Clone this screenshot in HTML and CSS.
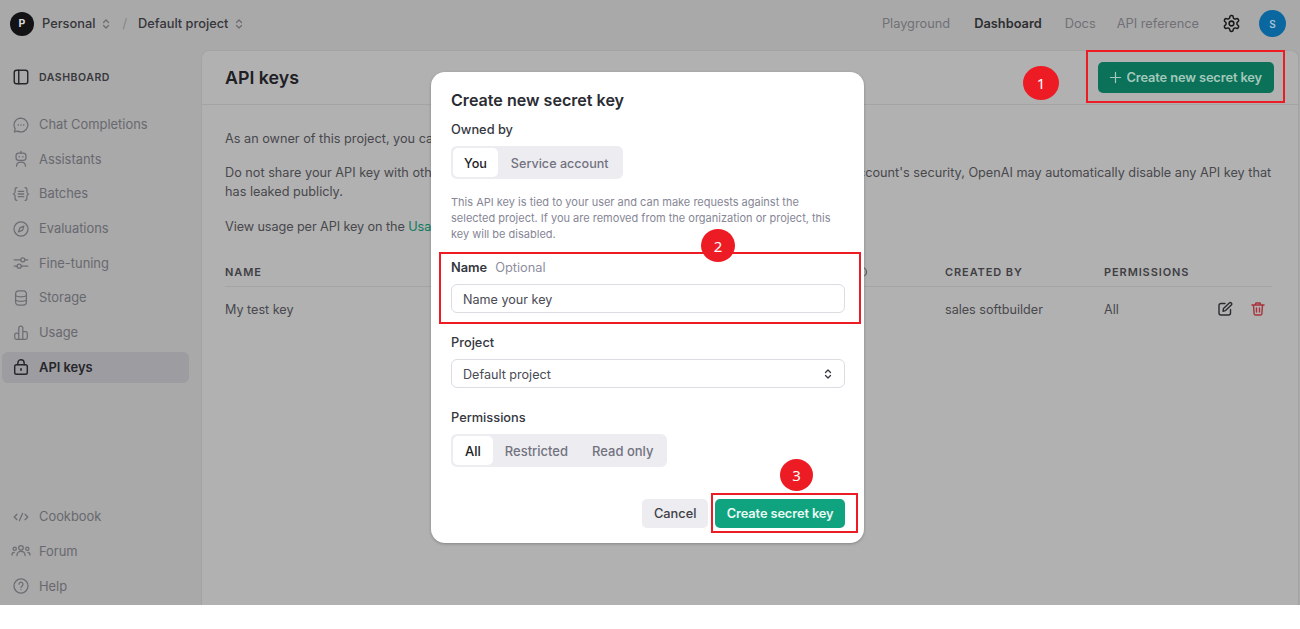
FILE: index.html
```html
<!DOCTYPE html>
<html lang="en">
<head>
<meta charset="utf-8">
<title>API keys</title>
<link rel="stylesheet" href="styles.css">
</head>
<body>
<div class="app">
  <header class="topbar">
    <div class="crumbs">
      <span class="org-badge">P</span>
      <span class="crumb">Personal</span>
      <svg class="updown" viewBox="0 0 10 14"><path d="M2.500 5.500L5 3l2.500 2.500M2.500 8.500L5 11l2.500-2.500"/></svg>
      <span class="slash">/</span>
      <span class="crumb">Default project</span>
      <svg class="updown" viewBox="0 0 10 14"><path d="M2.500 5.500L5 3l2.500 2.500M2.500 8.500L5 11l2.500-2.500"/></svg>
    </div>
    <nav class="topnav">
      <a class="topnav-link">Playground</a>
      <a class="topnav-link current">Dashboard</a>
      <a class="topnav-link">Docs</a>
      <a class="topnav-link">API reference</a>
      <svg class="gear" viewBox="0 0 24 24"><path d="M12.220 2h-.44a2 2 0 0 0-2 2v.18a2 2 0 0 1-1 1.730l-.43.25a2 2 0 0 1-2 0l-.15-.08a2 2 0 0 0-2.730.73l-.22.38a2 2 0 0 0 .73 2.730l.15.1a2 2 0 0 1 1 1.720v.51a2 2 0 0 1-1 1.740l-.15.09a2 2 0 0 0-.73 2.730l.22.38a2 2 0 0 0 2.730.73l.15-.08a2 2 0 0 1 2 0l.43.25a2 2 0 0 1 1 1.730V20a2 2 0 0 0 2 2h.44a2 2 0 0 0 2-2v-.18a2 2 0 0 1 1-1.730l.43-.25a2 2 0 0 1 2 0l.15.08a2 2 0 0 0 2.730-.73l.22-.39a2 2 0 0 0-.73-2.730l-.15-.08a2 2 0 0 1-1-1.740v-.5a2 2 0 0 1 1-1.740l.15-.09a2 2 0 0 0 .73-2.730l-.22-.38a2 2 0 0 0-2.730-.73l-.15.08a2 2 0 0 1-2 0l-.43-.25a2 2 0 0 1-1-1.730V4a2 2 0 0 0-2-2z"/><circle cx="12" cy="12" r="3"/></svg>
      <span class="avatar">S</span>
    </nav>
  </header>
  <div class="workspace">
    <aside class="sidebar">
      <div class="side-head">
        <svg class="side-icon strong" viewBox="0 0 20 20"><rect x="2.500" y="2.500" width="15" height="15" rx="2.500"/><path d="M7.500 2.500v15"/></svg>
        <span>DASHBOARD</span>
      </div>
      <div class="side-list">
        <a class="side-item"><svg class="side-icon" viewBox="0 0 20 20"><path d="M10 2.300a7.700 7.700 0 1 1-3.700 14.500l-3.600.8.800-3.500A7.700 7.700 0 0 1 10 2.300z"/><path class="dots" d="M7 10h.01M10 10h.01M13 10h.01"/></svg>Chat Completions</a>
        <a class="side-item"><svg class="side-icon" viewBox="0 0 20 20"><rect x="4.500" y="3.500" width="11" height="8" rx="3"/><path d="M10 1.500v2M5 18c0-3.500 2-4.500 5-4.500s5 1 5 4.500"/><path class="dots" d="M8 7.500h.01M12 7.500h.01"/></svg>Assistants</a>
        <a class="side-item"><svg class="side-icon wide" viewBox="0 0 20 20"><path d="M5.500 3C3 3 3.500 5 3.500 7S3.500 9.500 1.500 10c2 .5 2 1 2 3s-.5 4 2 4M14.500 3c2.500 0 2 2 2 4s0 2.500 2 3c-2 .5-2 1-2 3s.5 4-2 4M7 7h6M7 10h6M7 13h6"/></svg>Batches</a>
        <a class="side-item"><svg class="side-icon" viewBox="0 0 20 20"><circle cx="10" cy="10" r="7.800"/><path d="M13.200 6.800l-1.400 4.400-4.600 2 1.500-4.500z"/></svg>Evaluations</a>
        <a class="side-item"><svg class="side-icon" viewBox="0 0 20 20"><path d="M2.500 6.500h7M14.500 6.500h3M2.500 13.500h3M10.500 13.500h7"/><circle cx="12" cy="6.500" r="2.300"/><circle cx="8" cy="13.500" r="2.300"/></svg>Fine-tuning</a>
        <a class="side-item"><svg class="side-icon" viewBox="0 0 20 20"><rect x="4" y="2" width="12" height="16" rx="3.500"/><path d="M4 7.500c2 1.500 10 1.500 12 0M4 12.500c2 1.500 10 1.500 12 0"/></svg>Storage</a>
        <a class="side-item"><svg class="side-icon" viewBox="0 0 20 20"><path d="M7.500 17V4.500a2.200 2.200 0 0 1 4.500 0V17M12 8.500h3a2 2 0 0 1 2 2V15a2 2 0 0 1-2 2H5a2 2 0 0 1-2-2v-2.500a2.200 2.200 0 0 1 4.500 0"/></svg>Usage</a>
        <a class="side-item active"><svg class="side-icon strong" viewBox="0 0 20 20"><rect x="3" y="7.500" width="14" height="10.500" rx="2"/><path d="M6.500 7.500V5.500a3.500 3.500 0 0 1 7 0v2"/><path class="dots" d="M10 12v1.500"/></svg>API keys</a>
      </div>
      <div class="side-list side-foot">
        <a class="side-item"><svg class="side-icon" viewBox="0 0 20 20"><path d="M5.500 7L2.500 10l3 3M14.500 7l3 3-3 3M11.700 6l-3.400 8"/></svg>Cookbook</a>
        <a class="side-item"><svg class="side-icon wide" viewBox="0 0 22 20"><circle cx="11" cy="6.500" r="2.500"/><circle cx="4" cy="7.500" r="1.800"/><circle cx="18" cy="7.500" r="1.800"/><path d="M6.500 15c0-3 2-4.500 4.500-4.500s4.500 1.500 4.500 4.500M1 14.500c0-2 1-3 2.500-3M21 14.500c0-2-1-3-2.500-3"/></svg>Forum</a>
        <a class="side-item"><svg class="side-icon" viewBox="0 0 20 20"><circle cx="10" cy="10" r="7.800"/><path d="M7.800 8a2.200 2.200 0 1 1 3.400 1.900c-.8.500-1.200 1-1.200 1.800M10 14h.01"/></svg>Help</a>
      </div>
    </aside>
    <main class="card">
      <div class="card-head">
        <h1 class="card-title">API keys</h1>
        <button class="primary dim"><svg class="plus" viewBox="0 0 14 14"><path d="M7 1.500v11M1.500 7h11"/></svg>Create new secret key</button>
      </div>
      <div class="card-body">
        <p class="copy">As an owner of this project, you can view and manage all API keys in this project.</p>
        <p class="copy">Do not share your API key with others, or expose it in browser, or other client-side code. To protect your account's security, OpenAI may automatically disable any API key that has leaked publicly.</p>
        <p class="copy usage-note">View usage per API key on the <a class="link">Usage page</a>.</p>
        <div class="table">
          <div class="row head">
            <span>NAME</span>
            <span>SECRET KEY</span>
            <span class="last-used">LAST USED<svg class="info" viewBox="0 0 12 12"><circle cx="6" cy="6" r="4.500"/></svg></span>
            <span>CREATED BY</span>
            <span>PERMISSIONS</span>
            <span></span>
          </div>
          <div class="row">
            <span>My test key</span>
            <span>sk-...T3BA</span>
            <span>Never</span>
            <span>sales softbuilder</span>
            <span>All</span>
            <span class="actions">
              <svg class="act" viewBox="0 0 16 16"><path d="M8 2.500H4a2 2 0 0 0-2 2V12a2 2 0 0 0 2 2h7.500a2 2 0 0 0 2-2V8.500"/><path d="M6 10.200l.5-2.600 5.800-5.700a1.300 1.300 0 0 1 2 2L8.500 9.600z"/></svg>
              <svg class="act del" viewBox="0 0 16 16"><path d="M2 4h12M5.500 4V2.800A1 1 0 0 1 6.500 2h3a1 1 0 0 1 1 .8V4M3.500 4l.6 8.800A1.500 1.500 0 0 0 5.600 14h4.800a1.500 1.500 0 0 0 1.500-1.200L12.500 4M6.500 7v4M9.500 7v4"/></svg>
            </span>
          </div>
        </div>
      </div>
    </main>
  </div>
</div>

<section class="modal">
  <h2 class="modal-title">Create new secret key</h2>
  <div class="field-label owned">Owned by</div>
  <div class="segment">
    <span class="seg on">You</span>
    <span class="seg">Service account</span>
  </div>
  <p class="hint">This API key is tied to your user and can make requests against the selected project. If you are removed from the organization or project, this key will be disabled.</p>
  <div class="field-label name-label"><b>Name</b><span class="optional">Optional</span></div>
  <div class="control">Name your key</div>
  <div class="field-label project-label">Project</div>
  <div class="control">Default project
    <svg class="updown dark" viewBox="0 0 10 14"><path d="M2.500 5.500L5 3l2.500 2.500M2.500 8.500L5 11l2.500-2.500"/></svg>
  </div>
  <div class="field-label perm-label">Permissions</div>
  <div class="segment">
    <span class="seg on tight">All</span>
    <span class="seg tight">Restricted</span>
    <span class="seg tight">Read only</span>
  </div>
  <div class="modal-foot">
    <button class="secondary">Cancel</button>
    <button class="primary">Create secret key</button>
  </div>
</section>

<div class="mark box-one"></div>
<div class="mark box-two"></div>
<div class="mark box-three"></div>
<span class="pin pin-one">1</span>
<span class="pin pin-two">2</span>
<span class="pin pin-three">3</span>
</body>
</html>
```
FILE: styles.css
```css
* { box-sizing: border-box; }
html, body { margin: 0; height: 100%; overflow: hidden; background: #fff; }
body { font-family: Inter, "Liberation Sans", sans-serif; font-size: 12.800px; color: #3f3f45; position: relative; }
a { text-decoration: none; color: inherit; }
button { font: inherit; border: 0; cursor: pointer; }

.app { height: 605px; background: #a9a9a9; display: flex; flex-direction: column; }

/* top bar */
.topbar { height: 50px; flex: none; display: flex; align-items: center; justify-content: space-between; padding: 0 14px 3px 10px; }
.crumbs { display: flex; align-items: center; }
.org-badge { width: 24px; height: 24px; border-radius: 50%; background: #131316; color: #d8d8d8; font-size: 10.500px; font-weight: 700; display: flex; align-items: center; justify-content: center; margin-right: 8px; }
.crumb { font-weight: 500; color: #36363b; }
.updown { width: 10px; height: 14px; margin-left: 6px; fill: none; stroke: #6a6a70; stroke-width: 1.200; stroke-linecap: round; stroke-linejoin: round; }
.slash { color: #85858a; margin: 0 11px 0 11px; }
.topnav { display: flex; align-items: center; }
.topnav-link { color: #707076; margin-right: 23px; }
.topnav-link:nth-child(1) { margin-right: 24px; }
.topnav-link:nth-child(3) { margin-right: 21px; }
.topnav-link.current { color: #2e2e32; font-weight: 600; }
.gear { width: 19px; height: 19px; fill: none; stroke: #18181b; stroke-width: 1.900; stroke-linejoin: round; margin-right: 18px; }
.avatar { width: 27px; height: 27px; border-radius: 50%; background: #0a679f; color: #a9c2d4; font-size: 10px; font-weight: 600; display: flex; align-items: center; justify-content: center; }

/* layout */
.workspace { flex: 1; display: flex; min-height: 0; }
.sidebar { width: 201px; flex: none; padding: 0 12px 3.500px 2px; display: flex; flex-direction: column; }
.side-head { height: 54px; padding-left: 10px; display: flex; align-items: center; gap: 9px; font-size: 10.500px; font-weight: 600; letter-spacing: .55px; color: #38383d; }
.side-list { display: flex; flex-direction: column; gap: 3.700px; padding-top: 5px; }
.side-foot { margin-top: auto; }
.side-item { height: 31px; display: flex; align-items: center; gap: 9px; padding-left: 10px; border-radius: 6px; color: #68686f; font-size: 12.900px; }
.side-item.active { background: #9c9ca1; color: #26262a; font-weight: 600; }
.side-icon { width: 18px; height: 18px; flex: none; fill: none; stroke: #6d6d74; stroke-width: 1.400; stroke-linecap: round; stroke-linejoin: round; }
.side-icon.strong { stroke: #27272b; stroke-width: 1.600; }
.side-icon.wide { width: 20px; margin: 0 -1px; }
.dots { stroke-width: 1.800; }

/* card */
.card { flex: 1; margin-right: 4px; background: #b1b1b1; border: 1px solid #a4a4a4; border-bottom: 0; border-radius: 8px 8px 0 0; display: flex; flex-direction: column; }
.card-head { height: 54px; flex: none; display: flex; align-items: center; justify-content: space-between; padding: 0 21px 0 23px; border-bottom: 1px solid #a4a4a4; }
.card-title { margin: 0 0 1px; font-size: 17.800px; font-weight: 600; color: #202024; }
.card-body { padding: 24px 23px 0; }
.copy { margin: 0 0 15px; line-height: 19px; color: #48484d; width: 1050px; font-size: 12.700px; }
.usage-note { letter-spacing: -.1px; padding-top: 1px; margin-bottom: 14px; }
.link { color: #0d7a5f; }

.table { margin-top: 22px; }
.row { display: grid; grid-template-columns: 240px 320px 160px 159px 114px 54px; align-items: center; height: 44px; color: #48484d; font-size: 12.600px; }
.row.head { height: 29px; border-bottom: 1px solid #a4a4a4; font-size: 11px; font-weight: 600; letter-spacing: .9px; color: #3f3f44; padding-bottom: 2px; width: 1047px; }
.last-used { display: flex; align-items: center; gap: 3px; justify-content: flex-end; padding-right: 77px; }
.info { width: 12px; height: 12px; fill: none; stroke: #56565b; stroke-width: 1.200; flex: none; }
.actions { display: flex; gap: 17px; margin-left: -1px; }
.act { width: 16px; height: 16px; flex: none; fill: none; stroke: #2c2c30; stroke-width: 1.400; stroke-linecap: round; stroke-linejoin: round; }
.act.del { stroke: #a8323a; }

/* buttons */
.primary { height: 29px; border-radius: 5px; background: #10a37f; color: #eafaf5; font-weight: 600; padding: 0 11.500px; display: inline-flex; align-items: center; font-size: 12.800px; letter-spacing: -.1px; }
.primary.dim { height: 31px; padding: 0 12px 0 11px; background: #0c7159; color: #a3c9bc; margin-right: 3px; }
.plus { width: 13px; height: 13px; margin-right: 4px; fill: none; stroke: #a3c9bc; stroke-width: 1.300; stroke-linecap: round; }
.secondary { height: 29px; width: 66px; border-radius: 5px; background: #ececf1; color: #3f3f45; font-weight: 500; }

/* modal */
.modal { position: absolute; left: 431px; top: 72px; width: 433px; height: 471px; background: #fff; border-radius: 14px; padding: 17px 19px 0 20px; box-shadow: 0 1px 3px rgba(0,0,0,.25); display: flex; flex-direction: column; color: #353740; }
.modal-title { margin: 0; font-size: 16.100px; line-height: 22px; font-weight: 600; color: #2b2c33; }
.field-label { font-size: 12.800px; line-height: 18px; color: #353740; font-weight: 500; }
.owned { margin-top: 10px; }
.name-label { margin-top: 17px; }
.name-label b { font-weight: 600; }
.optional { color: #8e8ea0; font-weight: 400; margin-left: 8px; }
.project-label { margin-top: 21px; }
.perm-label { margin-top: 21px; }
.segment { margin-top: 7px; align-self: flex-start; display: flex; padding: 2px; height: 33px; background: #ececf1; border-radius: 6px; color: #73737f; font-weight: 500; font-size: 12.600px; }
.seg { display: flex; align-items: center; padding: 1px 12px 0 13px; border-radius: 5px; }
.seg.on { padding: 1px 11px 0; background: #fff; color: #202123; }
.seg.tight { padding: 0 12px; font-size: 13px; }
.hint { margin: 15px 0 0; font-size: 11px; line-height: 16px; color: #868696; width: 388px; }
.control { margin-top: 7px; height: 29px; display: flex; align-items: center; justify-content: space-between; padding: 1px 11px 0; border: 1px solid #dcdce3; border-radius: 6px; color: #4a4b55; width: 394px; font-size: 12.600px; }
.updown.dark { stroke: #353740; stroke-width: 1.300; margin: 0; }
.modal-foot { margin: 32px 0 0; display: flex; gap: 7px; justify-content: flex-end; }

/* annotations */
.mark { position: absolute; border: 2px solid #ed1c24; }
.box-one { left: 1086px; top: 50px; width: 199px; height: 53px; }
.box-two { left: 439px; top: 252px; width: 422px; height: 72px; }
.box-three { left: 711px; top: 493px; width: 147px; height: 40px; }
.pin { position: absolute; border-radius: 50%; background: #ed1c24; color: #fff; font-family: "Noto Sans", sans-serif; font-size: 15px; display: flex; align-items: center; justify-content: center; }
.pin-one { left: 1023px; top: 66px; width: 36px; height: 34px; }
.pin-two { left: 701px; top: 229px; width: 34px; height: 33px; }
.pin-three { left: 780px; top: 459px; width: 33px; height: 32px; }
```
